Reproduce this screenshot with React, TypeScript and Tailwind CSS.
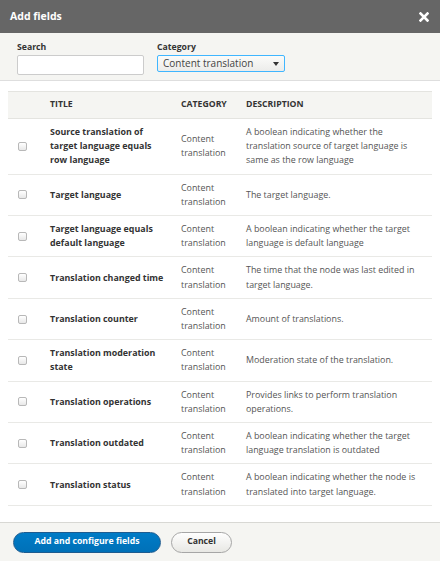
import React from "react";

const rows: [string, string][] = [
  ["Source translation of target language equals row language", "A boolean indicating whether the translation source of target language is same as the row language"],
  ["Target language", "The target language."],
  ["Target language equals default language", "A boolean indicating whether the target language is default language"],
  ["Translation changed time", "The time that the node was last edited in target language."],
  ["Translation counter", "Amount of translations."],
  ["Translation moderation state", "Moderation state of the translation."],
  ["Translation operations", "Provides links to perform translation operations."],
  ["Translation outdated", "A boolean indicating whether the target language translation is outdated"],
  ["Translation status", "A boolean indicating whether the node is translated into target language."],
];

export default function App() {
  return (
    <div
      className="w-[440px] h-[561px] bg-white flex flex-col overflow-hidden text-[#333]"
      style={{ fontFamily: "'Open Sans', 'DejaVu Sans', sans-serif" }}
    >
      <div className="h-[33px] bg-[#666666] flex items-center justify-between pl-[10px] pr-[11px] shrink-0">
        <span className="text-white font-bold text-[10.5px]">Add fields</span>
        <svg width="10" height="10" viewBox="0 0 10 10">
          <path d="M1.5 1.5 L8.5 8.5 M8.5 1.5 L1.5 8.5" stroke="white" strokeWidth="2.6" strokeLinecap="square" />
        </svg>
      </div>
      <div className="h-[48px] bg-[#f5f5f2] border-b border-[#dedede] flex gap-[13px] pl-[17px] pt-[8px] shrink-0">
        <div className="flex flex-col">
          <label className="text-[8.7px] font-bold leading-[12px] h-[14px]">Search</label>
          <div className="w-[127px] h-[20px] bg-white border border-[#cccccc] rounded-[2px]" />
        </div>
        <div className="flex flex-col">
          <label className="text-[8.7px] font-bold leading-[12px] h-[14px]">Category</label>
          <div className="w-[128px] h-[17px] bg-gradient-to-b from-[#fbfbf9] to-[#ececea] border border-[#40b6ff] rounded-[2px] flex items-center justify-between pl-[5px] pr-[5px]">
            <span className="text-[10px] text-[#444]">Content translation</span>
            <svg width="6" height="4" viewBox="0 0 6 4"><path d="M0 0 H6 L3 4 Z" fill="#333" /></svg>
          </div>
        </div>
      </div>
      <div className="px-[8px] pt-[10px] flex-1">
        <div className="grid grid-cols-[32px_131px_65px_196px] bg-[#f5f5f2] border-t border-b border-[#e4e4e0] h-[28px] items-center text-[8.7px] font-bold uppercase">
          <div />
          <div className="pl-[10px]">Title</div>
          <div className="pl-[10px]">Category</div>
          <div className="pl-[10px]">Description</div>
        </div>
        {rows.map(([title, desc]) => (
          <div
            key={title}
            className="grid grid-cols-[32px_131px_65px_196px] border-b border-[#e9e9e6] items-center py-[6px] text-[8.9px] leading-[14.2px]"
          >
            <div className="pl-[10px] flex">
              <div className="w-[9px] h-[9px] border border-[#b8b8b8] rounded-[2px] bg-gradient-to-b from-white to-[#e8e8e8]" />
            </div>
            <div className="pl-[10px] pr-[3px] font-bold">{title}</div>
            <div className="pl-[10px] pr-[2px] text-[#555]">Content translation</div>
            <div className="pl-[10px] pr-[8px] text-[#555]">{desc}</div>
          </div>
        ))}
      </div>
      <div className="h-[39px] bg-[#f5f5f2] border-t border-[#d8d8d4] flex items-center gap-[10px] pl-[13px] shrink-0">
        <button className="h-[21px] w-[148px] rounded-full bg-gradient-to-b from-[#007bc6] to-[#0071b8] border border-[#1e5c90] text-white text-[8.7px] font-bold">
          Add and configure fields
        </button>
        <button className="h-[21px] w-[61px] rounded-full bg-gradient-to-b from-[#fefefe] to-[#e8e8e4] border border-[#a6a6a6] text-[#333] text-[8.7px] font-bold">
          Cancel
        </button>
      </div>
    </div>
  );
}
